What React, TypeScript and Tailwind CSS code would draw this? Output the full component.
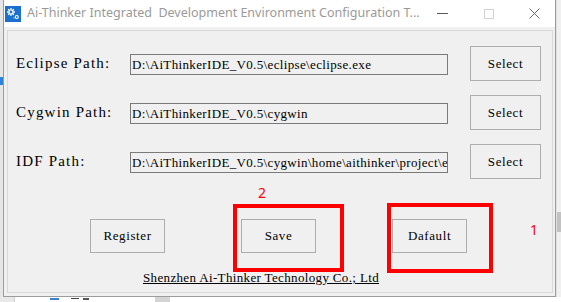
import React from 'react';

const serif = "font-['Liberation_Serif',serif]";

const paths = [
    { label: 'Eclipse Path:', value: 'D:\\AiThinkerIDE_V0.5\\eclipse\\eclipse.exe' },
    { label: 'Cygwin Path:', value: 'D:\\AiThinkerIDE_V0.5\\cygwin' },
    { label: 'IDF Path:', value: 'D:\\AiThinkerIDE_V0.5\\cygwin\\home\\aithinker\\project\\esp-idf' },
];

function AppIcon() {
    const teeth = [0, 45, 90, 135, 180, 225, 270, 315];
    return (
        <svg width="16" height="16" viewBox="0 0 16 16">
            <rect width="16" height="16" fill="#1b6fce" />
            <g stroke="#fff" fill="none">
                <circle cx="6" cy="6" r="2.1" strokeWidth="1.4" />
                {teeth.map((a) => (
                    <line
                        key={a}
                        x1={6 + Math.cos((a * Math.PI) / 180) * 2.8}
                        y1={6 + Math.sin((a * Math.PI) / 180) * 2.8}
                        x2={6 + Math.cos((a * Math.PI) / 180) * 4}
                        y2={6 + Math.sin((a * Math.PI) / 180) * 4}
                        strokeWidth="1.3"
                    />
                ))}
                <circle cx="11.8" cy="11" r="1.5" strokeWidth="1.1" />
                <circle cx="9" cy="11.8" r="0.6" fill="#fff" stroke="none" />
            </g>
        </svg>
    );
}

function WinButton({ children, className = '' }: { children: React.ReactNode; className?: string }) {
    return (
        <button
            className={`flex items-center justify-center border border-[#adadad] bg-[#f0f0f0] text-[13px] tracking-[0.6px] text-black ${serif} ${className}`}
        >
            {children}
        </button>
    );
}

export default function App() {
    return (
        <div className="w-[561px] h-[302px] overflow-hidden bg-[#ececec] flex flex-col">
            <div className="flex h-[297px]">
                {/* left strip */}
                <div className="w-[3px] flex flex-col bg-[#e6e6e6]">
                    <div className="h-[77px]" />
                    <div className="h-[8px] bg-[#2d83d6]" />
                </div>

                {/* window */}
                <div className="w-[553px] flex flex-col border-l border-r border-b border-[#9c9c9c] bg-white">
                    <div className="h-[27px] flex items-center bg-white">
                        <div className="ml-[1px]">
                            <AppIcon />
                        </div>
                        <span className="ml-[6px] whitespace-pre text-[12.5px] text-[#9a9a9a] font-['Noto_Sans',sans-serif]">
                            {'Ai-Thinker Integrated  Development Environment Configuration T...'}
                        </span>
                        <div className="ml-auto flex items-center h-full">
                            <div className="w-[46px] flex justify-center">
                                <div className="w-[11px] h-px bg-[#5a5a5a]" />
                            </div>
                            <div className="w-[46px] flex justify-center">
                                <div className="w-[10px] h-[10px] border border-[#d2d2d2]" />
                            </div>
                            <div className="w-[46px] flex justify-center">
                                <svg width="11" height="11" viewBox="0 0 11 11">
                                    <path d="M0.5 0.5 L10.5 10.5 M10.5 0.5 L0.5 10.5" stroke="#6a6a6a" strokeWidth="1" />
                                </svg>
                            </div>
                        </div>
                    </div>

                    <div className="flex-1 bg-[#f0f0f0] pl-[3px] pr-[2px] pt-[3px] pb-[3px] flex">
                        <div className="relative flex-1 border border-[#d9d9d9] flex flex-col">
                            <div className="mt-[15px] flex flex-col gap-[14px]">
                                {paths.map((p) => (
                                    <div key={p.label} className="flex items-center pl-[8px]">
                                        <span className={`w-[114px] text-[15px] tracking-[1.2px] text-black ${serif}`}>
                                            {p.label}
                                        </span>
                                        <div
                                            className={`w-[318px] h-[21px] mt-[2px] border border-[#7a7a7a] bg-[#f0f0f0] pl-[1px] flex items-center overflow-hidden whitespace-nowrap text-[13px] tracking-[0.35px] text-black ${serif}`}
                                        >
                                            {p.value}
                                        </div>
                                        <WinButton className="ml-[22px] w-[71px] h-[35px]">Select</WinButton>
                                    </div>
                                ))}
                            </div>

                            <div className="mt-[40px] flex pl-[82px] gap-[76px]">
                                <WinButton className="w-[75px] h-[34px]">Register</WinButton>
                                <WinButton className="w-[75px] h-[34px]">Save</WinButton>
                                <WinButton className="w-[75px] h-[34px]">Dafault</WinButton>
                            </div>

                            <div className="mt-[11px] pl-[135px]">
                                <span
                                    className={`underline underline-offset-[1px] text-[13px] leading-[13px] tracking-[0.35px] text-black ${serif}`}
                                >
                                    Shenzhen Ai-Thinker Technology Co.; Ltd
                                </span>
                            </div>

                            {/* red annotations */}
                            <div className="absolute left-[225px] top-[173px] w-[111px] h-[68px] border-[4px] border-[#ff0000]" />
                            <div className="absolute left-[379px] top-[172px] w-[106px] h-[70px] border-[4px] border-[#ff0000]" />
                            <span className="absolute left-[250px] top-[154px] text-[14px] leading-[16px] text-[#ff0000] font-['Noto_Sans',sans-serif]">
                                2
                            </span>
                            <span className="absolute left-[522px] top-[191px] text-[14px] leading-[16px] text-[#ff0000] font-['Noto_Sans',sans-serif]">
                                1
                            </span>
                        </div>
                    </div>
                </div>

                {/* right strip */}
                <div className="flex-1 flex flex-col bg-[#f0f0f0] border-l border-[#e0e0e0]">
                    <div className="h-[212px]" />
                    <div className="h-[20px] bg-[#c2c2c2]" />
                </div>
            </div>

            {/* stuff behind the window */}
            <div className="flex-1 flex items-start bg-white">
                <div className="w-[15px] h-full bg-[#e9e9e9] border-r border-[#cfcfcf]" />
                <div className="ml-[35px] w-[9px] h-[2px] mt-[1px] bg-[#3b7fd1]" />
                <div className="ml-[12px] mt-[1px] w-[8px] h-[1px] bg-[#444]" />
                <div className="ml-[4px] mt-[1px] w-[6px] h-[2px] bg-[#555]" />
                <div className="ml-[66px] w-[15px] h-full bg-[#d4d4d4]" />
            </div>
        </div>
    );
}
